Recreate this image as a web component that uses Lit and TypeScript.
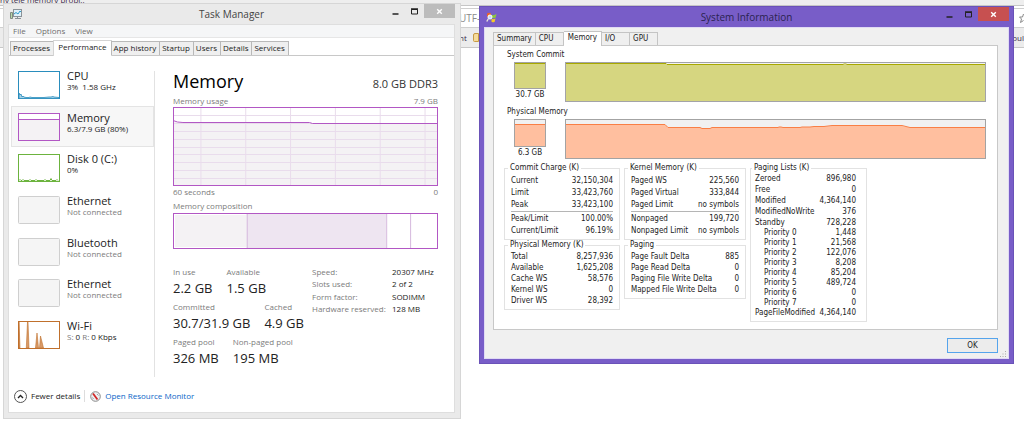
import { LitElement, html, svg, css } from "lit";
import { customElement, property } from "lit/decorators.js";
import { classMap } from "lit/directives/class-map.js";

const captionStyles = css`
  .caption {
    display: grid;
    grid-template-columns: 1fr auto 1fr;
    align-items: center;
  }
  .caption h1 {
    margin: 0;
    font-size: 10px;
    font-weight: 400;
    line-height: 20px;
  }
  .caption-buttons {
    display: flex;
    justify-self: end;
    align-self: start;
  }
  button {
    font: inherit;
    color: inherit;
    padding: 0;
    border: 0;
    background: none;
    cursor: pointer;
  }
  .caption-buttons button {
    width: 19px;
    height: 14px;
    display: grid;
    place-items: center;
  }
  .caption-buttons .close {
    width: 31px;
  }
  svg {
    display: block;
  }
`;

const captionButtons = html`
  <div class="caption-buttons">
    <button aria-label="Minimize">
      <svg width="9" height="9"><path d="M1.500 7h6" stroke="#222" stroke-width="1.500" /></svg>
    </button>
    <button aria-label="Maximize">
      <svg width="9" height="9">
        <path d="M1.500 2.500h6v4.500h-6z" fill="none" stroke="#222" />
        <path d="M1 2h7" stroke="#222" stroke-width="1.500" />
      </svg>
    </button>
    <button class="close" aria-label="Close">
      <svg width="7" height="7"><path d="M1.200 1.200l4.600 4.600M5.800 1.200l-4.600 4.600" stroke="#fff" stroke-width="1.400" /></svg>
    </button>
  </div>
`;

interface Device {
  name: string;
  detail: unknown;
  kind: "cpu" | "memory" | "disk" | "off" | "wifi";
}

const devices: Device[] = [
  { name: "CPU", detail: "3%  1.58 GHz", kind: "cpu" },
  { name: "Memory", detail: "6.3/7.9 GB (80%)", kind: "memory" },
  { name: "Disk 0 (C:)", detail: "0%", kind: "disk" },
  { name: "Ethernet", detail: "Not connected", kind: "off" },
  { name: "Bluetooth", detail: "Not connected", kind: "off" },
  { name: "Ethernet", detail: "Not connected", kind: "off" },
  { name: "Wi-Fi", detail: html`<i>S:</i> 0 <i>R:</i> 0 Kbps`, kind: "wifi" },
];

const thumbs = {
  cpu: svg`<rect x=".5" y=".5" width="41" height="27" fill="#fff" stroke="#2a8dbd"/>
    <path d="M1 22l1 2 1-1 1 3 1-1 1 1 2 .500h3l1-.500 2 .500h12l5-.500h2l2-.500 1 .500 5 .500v1H1z" fill="#a8d2e8" stroke="#2a8dbd" stroke-width=".8"/>`,
  memory: svg`<rect x=".5" y=".5" width="41" height="27" fill="#fff"/><rect x="1" y="6" width="40" height="21" fill="#f4f2f4"/>
    <path d="M1 6.500h40" stroke="#b257c4"/><rect x=".5" y=".5" width="41" height="27" fill="none" stroke="#b257c4"/>`,
  disk: svg`<rect x=".5" y=".5" width="41" height="27" fill="#fff" stroke="#6cb33e"/>
    <path d="M1 26.500l1-1 1 1h1l1-1 1 1h5l1-1 1 1h4l1-1 1 1h7l1-1 1 1h4l1-2 1 2h4l1-1 1 1" fill="none" stroke="#6cb33e"/>`,
  off: svg`<rect x=".5" y=".5" width="41" height="27" rx="1" fill="#f5f5f5" stroke="#cfcfcf"/>`,
  wifi: svg`<rect x=".5" y=".5" width="41" height="27" fill="#fff" stroke="#c0702c"/>
    <path d="M1 1l1 26H1zM9.500 1l-1.200 26h2.700L10 1zM19 12l-1.500 15h3zM22.500 15l-1 12h4z" fill="#d99a68" stroke="#c0702c" stroke-width=".6"/>`,
};

@customElement("task-manager")
class TaskManager extends LitElement {
  @property() selected = "Memory";

  static styles = [
    captionStyles,
    css`
      :host {
        display: flex;
        flex-direction: column;
        box-sizing: border-box;
        border: 1px solid #d6d6d6;
        padding: 0 5px 5px 4px;
        background: #eaeaea;
        color: #222;
        font: 8px/12px "Open Sans", "Noto Sans", sans-serif;
      }
      .caption {
        height: 20px;
        color: #444;
      }
      .app-icon {
        margin-left: 2px;
      }
      .close {
        background: #bcbcbc;
      }
      .client {
        flex: 1;
        display: flex;
        flex-direction: column;
        background: #fff;
        border: 1px solid #dedede;
      }
      .menu {
        display: flex;
        gap: 10px;
        padding: 0 4px;
        height: 12px;
        background: #f5f6f7;
        border-bottom: 1px solid #e6e6e6;
        color: #6d6d6d;
      }
      .tabs {
        display: flex;
        align-items: flex-end;
        height: 17px;
        padding: 0 1px;
        border-bottom: 1px solid #c8c8c8;
      }
      .tabs button {
        height: 14px;
        padding: 0 3px 1px 2px;
        border: 1px solid #b9b9b9;
        border-bottom: 0;
        margin-left: -1px;
        background: #efefef;
        color: #222;
      }
      .tabs button:first-child {
        margin-left: 0;
      }
      .tabs .current {
        height: 16px;
        padding: 0 4px 3px;
        margin-bottom: -1px;
        background: #fff;
        border-color: #d4d4d4;
      }
      .body {
        flex: 1;
        display: grid;
        grid-template-columns: 143px 1fr;
        padding: 8px 16px 0 2px;
      }
      .devices {
        display: grid;
        grid-template-rows: repeat(7, 1fr);
        height: 292px;
      }
      .device {
        display: grid;
        grid-template-columns: 42px 1fr;
        gap: 7px;
        align-items: center;
        text-align: left;
        padding: 0 6px;
        border: 1px solid transparent;
      }
      .device.active {
        background: #f7f7f7;
        border-color: #e4e4e4;
      }
      .device b {
        display: block;
        font-weight: 400;
        font-size: 11px;
        line-height: 13px;
      }
      .device small {
        display: block;
        font-size: 8px;
        line-height: 10px;
        padding-bottom: 9px;
        white-space: pre;
      }
      .device.off small,
      i {
        color: #7b7b7b;
        font-style: normal;
      }
      .details {
        margin: 7px 0 0;
        padding-left: 18px;
        height: 306px;
        border-left: 1px solid #e2e2e2;
      }
      .split {
        display: flex;
        justify-content: space-between;
        align-items: baseline;
        color: #7b7b7b;
      }
      h2 {
        margin: 0;
        font-size: 18px;
        font-weight: 400;
        line-height: 20px;
        padding-bottom: 4px;
        color: #000;
      }
      .installed {
        font-size: 11px;
        color: #333;
      }
      .chart,
      .composition {
        width: 100%;
      }
      .chart {
        height: 79px;
      }
      .composition {
        height: 36px;
      }
      .label {
        color: #7b7b7b;
      }
      .gap {
        padding: 2px 0 1px;
      }
      .facts {
        display: grid;
        grid-template-columns: 139px 1fr;
        padding-top: 17px;
      }
      .pairs {
        display: flex;
        gap: 14px;
        height: 35px;
        white-space: nowrap;
      }
      .pairs strong {
        display: block;
        font-size: 13px;
        font-weight: 400;
        line-height: 20px;
      }
      dl {
        display: grid;
        grid-template-columns: 80px 1fr;
        margin: 0;
        height: 49px;
        align-content: space-between;
        white-space: nowrap;
      }
      dd {
        margin: 0;
      }
      .foot {
        display: flex;
        align-items: center;
        height: 32px;
        padding: 0 5px;
      }
      .foot button {
        display: flex;
        align-items: center;
        gap: 4px;
        padding-right: 4px;
      }
      .foot a {
        display: flex;
        align-items: center;
        gap: 4px;
        padding-left: 5px;
        border-left: 1px solid #ddd;
        color: #0a66c8;
        text-decoration: none;
      }
    `,
  ];

  private pair(label: string, value: string) {
    return html`<div><span class="label">${label}</span><strong>${value}</strong></div>`;
  }

  render() {
    const columns = [28, 73, 118, 163, 208, 253];
    const rows = [8, 16, 24, 32, 40, 47, 55, 63, 71];
    return html`
      <header class="caption">
        <svg class="app-icon" width="12" height="11">
          <rect x="3.500" y=".5" width="8" height="7" fill="#dff1fa" stroke="#8a9298" />
          <path d="M4 5l2-1.500 2 1.500 2-3 1 1" fill="none" stroke="#2f9ccb" />
          <path d="M5 9.500h6M7.500 8v1" stroke="#8a9298" />
          <path d="M.5 3.500h2v6h-2z" fill="#b8d8a8" stroke="#7e8a80" />
        </svg>
        <h1>Task Manager</h1>
        ${captionButtons}
      </header>
      <div class="client">
        <nav class="menu"><button>File</button><button>Options</button><button>View</button></nav>
        <nav class="tabs">
          ${["Processes", "Performance", "App history", "Startup", "Users", "Details", "Services"].map(
            (t) => html`<button class=${classMap({ current: t === "Performance" })}>${t}</button>`
          )}
        </nav>
        <div class="body">
          <div class="devices">
            ${devices.map(
              (d) => html`<button class=${classMap({ device: true, active: d.name === this.selected, off: d.kind === "off" })}>
                <svg width="42" height="28">${thumbs[d.kind]}</svg>
                <span><b>${d.name}</b><small>${d.detail}</small></span>
              </button>`
            )}
          </div>
          <section class="details">
            <div class="split"><h2>Memory</h2><span class="installed">8.0 GB DDR3</span></div>
            <div class="split"><span>Memory usage</span><span>7.9 GB</span></div>
            <svg class="chart" viewBox="0 0 266 79" preserveAspectRatio="none">
              <rect width="266" height="79" fill="#fff" />
              <path d="M0 14q4 2 10 2h86l3 .500h167V79H0z" fill="#f4f2f4" />
              <path d="${columns.map((x) => `M${x} 1v77`).join("")}${rows.map((y) => `M1 ${y}.500h264`).join("")}" stroke="#e9dcec" />
              <path d="M0 13.500q4 2 10 2h127l3 1h126" fill="none" stroke="#b257c4" />
              <rect x=".5" y=".5" width="265" height="78" fill="none" stroke="#b257c4" />
            </svg>
            <div class="split"><span>60 seconds</span><span>0</span></div>
            <div class="label gap">Memory composition</div>
            <svg class="composition" viewBox="0 0 266 36" preserveAspectRatio="none">
              <rect width="266" height="36" fill="#fff" />
              <rect x="2" y="2" width="72" height="32" fill="#f4f2f4" />
              <rect x="74" y="1" width="140" height="34" fill="#eee5f1" />
              <path d="M74.500 1v34M214.500 1v34M238.500 1v34" stroke="#d5b9dd" />
              <rect x=".5" y=".5" width="265" height="35" fill="none" stroke="#b257c4" />
            </svg>
            <div class="facts">
              <div>
                <div class="pairs">${this.pair("In use", "2.2 GB")}${this.pair("Available", "1.5 GB")}</div>
                <div class="pairs">${this.pair("Committed", "30.7/31.9 GB")}${this.pair("Cached", "4.9 GB")}</div>
                <div class="pairs">${this.pair("Paged pool", "326 MB")}${this.pair("Non-paged pool", "195 MB")}</div>
              </div>
              <dl>
                <dt class="label">Speed:</dt><dd>20307 MHz</dd>
                <dt class="label">Slots used:</dt><dd>2 of 2</dd>
                <dt class="label">Form factor:</dt><dd>SODIMM</dd>
                <dt class="label">Hardware reserved:</dt><dd>128 MB</dd>
              </dl>
            </div>
          </section>
        </div>
        <footer class="foot">
          <button>
            <svg width="13" height="13">
              <circle cx="6.500" cy="6.500" r="6" fill="#fff" stroke="#555" />
              <path d="M4 8l2.500-2.500L9 8" fill="none" stroke="#222" stroke-width="1.400" />
            </svg>
            Fewer details
          </button>
          <a href="#monitor">
            <svg width="11" height="11">
              <circle cx="5.500" cy="5.500" r="4.800" fill="#eef0f2" stroke="#8a8a8a" />
              <path d="M3 2.500l4.500 6" stroke="#d02424" stroke-width="1.800" />
              <path d="M7 3l1.500 1.500M2.500 6.500l1 1.500" stroke="#9aa4ac" />
            </svg>
            Open Resource Monitor
          </a>
        </footer>
      </div>
    `;
  }
}

type Row = [string, string];

const commit: Row[] = [
  ["Current", "32,150,304"],
  ["Limit", "33,423,760"],
  ["Peak", "33,423,100"],
  ["Peak/Limit", "100.00%"],
  ["Current/Limit", "96.19%"],
];
const kernel: Row[] = [
  ["Paged WS", "225,560"],
  ["Paged Virtual", "333,844"],
  ["Paged Limit", "no symbols"],
  ["Nonpaged", "199,720"],
  ["Nonpaged Limit", "no symbols"],
];
const physical: Row[] = [
  ["Total", "8,257,936"],
  ["Available", "1,625,208"],
  ["Cache WS", "58,576"],
  ["Kernel WS", "0"],
  ["Driver WS", "28,392"],
];
const paging: Row[] = [
  ["Page Fault Delta", "885"],
  ["Page Read Delta", "0"],
  ["Paging File Write Delta", "0"],
  ["Mapped File Write Delta", "0"],
];
const lists: Row[] = [
  ["Zeroed", "896,980"],
  ["Free", "0"],
  ["Modified", "4,364,140"],
  ["ModifiedNoWrite", "376"],
  ["Standby", "728,228"],
  ["Priority 0", "1,448"],
  ["Priority 1", "21,568"],
  ["Priority 2", "122,076"],
  ["Priority 3", "8,208"],
  ["Priority 4", "85,204"],
  ["Priority 5", "489,724"],
  ["Priority 6", "0"],
  ["Priority 7", "0"],
  ["PageFileModified", "4,364,140"],
];

@customElement("system-information")
class SystemInformation extends LitElement {
  static styles = [
    captionStyles,
    css`
      :host {
        display: block;
        box-sizing: border-box;
        border: 1px solid #6a52b8;
        padding: 0 4px 4px;
        background: #785dc8;
        color: #222;
        font: 8px/10px "DejaVu Sans Condensed", "Open Sans", sans-serif;
      }
      .caption {
        height: 20px;
        color: #2b2350;
      }
      .caption h1 {
        font-family: "Open Sans", sans-serif;
      }
      .app-icon {
        margin-left: 2px;
      }
      .close {
        background: #c75050;
      }
      .client {
        padding: 4px 10px 0 8px;
        background: #f0f0f0;
        border: 1px solid #e0daf4;
      }
      .tabs {
        display: flex;
        align-items: flex-end;
        height: 13px;
      }
      .tabs button {
        flex: 0 0 28px;
        box-sizing: border-box;
        height: 13px;
        padding: 0 3px;
        text-align: left;
        border: 1px solid #c4c4c4;
        border-bottom: 0;
        border-left-width: 0;
        background: #efefef;
      }
      .tabs button:first-child {
        flex-basis: 40px;
        border-left-width: 1px;
      }
      .tabs .current {
        flex-basis: 37px;
        height: 15px;
        padding: 0 4px 2px;
        margin-bottom: -1px;
        background: #fff;
      }
      .page {
        background: #fff;
        border: 1px solid #c8c8c8;
        padding: 4px 11px 7px 10px;
      }
      .meter {
        display: grid;
        grid-template-columns: 32px 1fr;
        column-gap: 19px;
        padding: 0 0 0 10px;
      }
      .meter h2 {
        grid-column: 1 / -1;
        margin: 0 0 2px -7px;
        font-size: 8px;
        font-weight: 400;
        line-height: 10px;
      }
      .meter figure {
        margin: 0;
        text-align: center;
        white-space: nowrap;
      }
      .meter figcaption {
        padding-top: 1px;
      }
      .meter + .meter {
        padding-top: 5px;
      }
      .history {
        width: 100%;
        height: 40px;
      }
      .groups {
        display: grid;
        grid-template-columns: 116px 122px 117px;
        gap: 4px;
        padding-top: 4px;
        align-items: start;
      }
      .stack {
        display: grid;
      }
      fieldset {
        min-width: 0;
        margin: 0;
        padding: 0 6px 3px;
        border: 1px solid #e2e2e2;
      }
      legend {
        padding: 0 2px;
        margin-left: -3px;
        line-height: 10px;
      }
      table {
        width: 100%;
        border-spacing: 0;
      }
      th,
      td {
        padding: 0;
        font-weight: 400;
        text-align: left;
        line-height: 11px;
        white-space: nowrap;
      }
      td {
        text-align: right;
      }
      .ruled {
        padding-top: 2px;
        padding-bottom: 2px;
      }
      .ruled th,
      .ruled td {
        line-height: 12px;
      }
      .ruled tr:nth-child(4) th,
      .ruled tr:nth-child(4) td {
        border-top: 1px solid #b5b5b5;
        padding-top: 1px;
      }
      .plain {
        padding-top: 1px;
      }
      .lists {
        padding: 0 10px 3px 4px;
      }
      .lists tr:nth-child(n + 6) > * {
        line-height: 10px;
      }
      .lists .nested th {
        padding-left: 9px;
      }
      .actions {
        display: flex;
        justify-content: flex-end;
        padding-top: 8px;
      }
      .actions button {
        width: 51px;
        height: 15px;
        border: 1px solid #55a4ec;
        background: #ececec;
      }
      .grip {
        margin: -2px -9px 0 auto;
      }
    `,
  ];

  private group(title: string, rows: Row[], kind: string) {
    return html`<fieldset class=${kind}>
      <legend>${title}</legend>
      <table>
        ${rows.map(
          ([name, value]) => html`<tr class=${classMap({ nested: name.startsWith("Priority") })}>
            <th scope="row">${name}</th>
            <td>${value}</td>
          </tr>`
        )}
      </table>
    </fieldset>`;
  }

  render() {
    return html`
      <header class="caption">
        <svg class="app-icon" width="11" height="11">
          <path d="M1 1.500q2-1.500 4 0v3.500q-2-1.500-4 0z" fill="#e8622c" />
          <path d="M5.500 2.500q2 1.500 5-.500l-.800 3.500q-2 1.500-4.200 0z" fill="#8cc63e" />
          <path d="M5.500 6.500q2 1.500 4-.200l-.800 3.500q-1.500 1-3.200 0z" fill="#f6c927" />
          <circle cx="4" cy="5" r="2" fill="#bfe0f4" stroke="#fff" />
          <path d="M2.500 6.500L.8 9.500" stroke="#e9e4d8" stroke-width="1.400" />
        </svg>
        <h1>System Information</h1>
        ${captionButtons}
      </header>
      <div class="client">
        <nav class="tabs">
          ${["Summary", "CPU", "Memory", "I/O", "GPU"].map(
            (t) => html`<button class=${classMap({ current: t === "Memory" })}>${t}</button>`
          )}
        </nav>
        <main class="page">
          <section class="meter">
            <h2>System Commit</h2>
            <figure>
              <svg width="32" height="27">
                <rect x=".5" y=".5" width="31" height="26" fill="#d6d680" stroke="#a3a3a3" />
                <path d="M1 1.500h30" stroke="#a8a800" />
              </svg>
              <figcaption>30.7 GB</figcaption>
            </figure>
            <svg class="history" viewBox="0 0 421 40" preserveAspectRatio="none">
              <rect width="421" height="40" fill="#f4f4f4" />
              <path d="M0 1h101l1 2h319v37H0z" fill="#d6d680" />
              <path d="M1 1.500h100l1 1h176l1-.500h2l1 .500h138" fill="none" stroke="#a8a800" />
              <rect x=".5" y=".5" width="420" height="39" fill="none" stroke="#a3a3a8" />
            </svg>
          </section>
          <section class="meter">
            <h2>Physical Memory</h2>
            <figure>
              <svg width="32" height="28">
                <rect x=".5" y=".5" width="31" height="27" fill="#f1f1f1" stroke="#a3a3a3" />
                <rect x="1" y="5" width="30" height="22" fill="#ffbf9f" />
                <path d="M1 5.500h30" stroke="#f97f45" />
              </svg>
              <figcaption>6.3 GB</figcaption>
            </figure>
            <svg class="history" viewBox="0 0 421 40" preserveAspectRatio="none">
              <rect width="421" height="40" fill="#f1f1f1" />
              <path d="M0 5.500h100l3 3h32l2 1h8l2-1h66l1-.500h2l2 .500h17l2-.500h8l4-.500h10l8-.500h70l8 1.500h76v31H0z" fill="#ffbf9f" />
              <path d="M0 5.500h100l3 3h32l2 1h8l2-1h66l1-.500h2l2 .500h17l2-.500h8l4-.500h10l8-1h70l8 2h76" fill="none" stroke="#f97f45" />
              <rect x=".5" y=".5" width="420" height="39" fill="none" stroke="#a3a3a3" />
            </svg>
          </section>
          <section class="groups">
            <div class="stack">
              ${this.group("Commit Charge (K)", commit, "ruled")} ${this.group("Physical Memory (K)", physical, "plain")}
            </div>
            <div class="stack">
              ${this.group("Kernel Memory (K)", kernel, "ruled")} ${this.group("Paging", paging, "plain")}
            </div>
            ${this.group("Paging Lists (K)", lists, "lists")}
          </section>
        </main>
        <div class="actions"><button>OK</button></div>
        <svg class="grip" width="7" height="7">
          <path d="M5 0h1v1h-1zM5 2.500h1v1h-1zM5 5h1v1h-1zM2.500 2.500h1v1h-1zM2.500 5h1v1h-1zM0 5h1v1h-1z" fill="#aaa" />
        </svg>
      </div>
    `;
  }
}

@customElement("app-root")
class AppRoot extends LitElement {
  static styles = css`
    :host {
      display: block;
      position: relative;
      height: 100vh;
      overflow: hidden;
      background: #fff;
      color: #3b2a48;
      font: 8px/12px "Open Sans", "Noto Sans", sans-serif;
    }
    .strip {
      display: flex;
      align-items: flex-end;
      height: 5px;
      overflow: hidden;
      background: #eeeeee;
      border-bottom: 1px solid #c6c6c6;
      line-height: 10px;
    }
    .address,
    .bookmarks {
      display: flex;
      align-items: center;
    }
    .address {
      height: 18px;
      padding-left: 459px;
      margin-top: 2px;
      border: solid #cfcfcf;
      border-width: 1px 0;
      font-size: 10px;
      color: #8a8a8a;
    }
    .bookmarks {
      gap: 6px;
      height: 19px;
      padding-left: 459px;
      background: #ececec;
      border-bottom: 1px solid #c8c8c8;
    }
    .end {
      margin-left: auto;
    }
    .windows {
      position: absolute;
      inset: 3px 10px 2px 3px;
      display: grid;
      grid-template-columns: 458fr 535fr;
      column-gap: 18px;
      align-items: start;
    }
    task-manager {
      height: 100%;
      min-height: 416px;
    }
    system-information {
      margin-top: 3px;
    }
  `;

  render() {
    return html`
      <div class="strip">ny tele memory probl..</div>
      <div class="address">
        <span>UTF-</span>
        <svg class="end" width="5" height="9"><path d="M4.500 0L3.500 3H.5l2 2-1 3.500 3-2" fill="none" stroke="#888" /></svg>
      </div>
      <div class="bookmarks">
        <span>nt</span>
        <svg width="6" height="9"><path d="M5.500.5H2q-1.500 0-1.500 1.500v5.500q0 1 1 1h4z" fill="#f6dc9a" stroke="#c79a45" /></svg>
        <span class="end">oul</span>
      </div>
      <div class="windows">
        <task-manager></task-manager>
        <system-information></system-information>
      </div>
    `;
  }
}
